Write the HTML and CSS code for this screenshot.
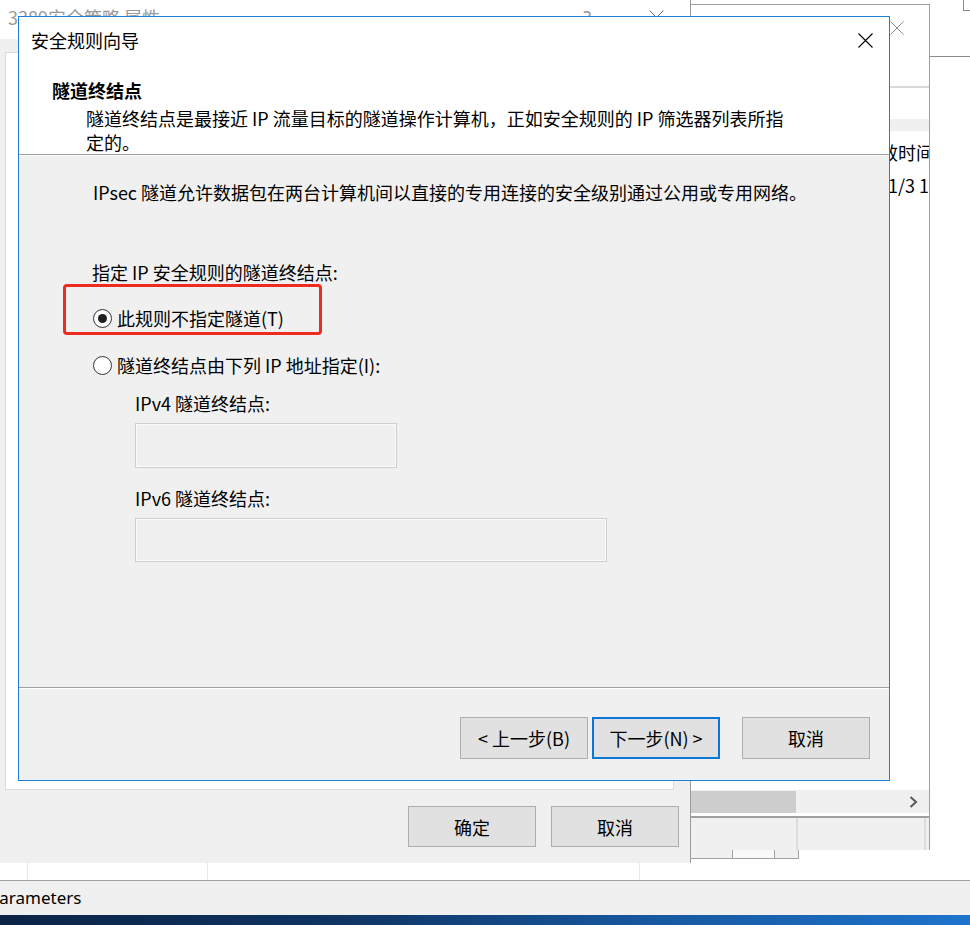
FILE: index.html
```html
<!DOCTYPE html>
<html lang="zh-CN">
<head>
<meta charset="utf-8">
<title>安全规则向导</title>
<link rel="stylesheet" href="styles.css">
</head>
<body>
<div class="desk">
  <div class="farwin"></div>
  <div class="farwin2"></div>
  <div class="listwin"><span class="lcol lc1"></span><span class="lcol lc2"></span><span class="lcol lc3"></span></div>
  <div class="minitabs"><span class="mt mt1"></span><span class="mt mt2"></span><span class="mt mt3"></span></div>

  <div class="backwin">
    <div class="bw-title">
      <svg class="bw-close" width="14" height="14" viewBox="0 0 14 14"><path d="M0.5 0.5 L13.5 13.5 M13.5 0.5 L0.5 13.5" stroke="#8c8c8c" stroke-width="1" fill="none"/></svg>
    </div>
    <div class="bw-rule"></div>
    <div class="bw-gap"></div>
    <div class="bw-band"></div>
    <div class="bw-list">
      <div class="bw-head">生效时间</div>
      <div class="bw-row">2021/1/3 14:05</div>
    </div>
    <div class="bw-scroll">
      <div class="bw-thumb"></div>
      <svg class="bw-arrow" width="9" height="12" viewBox="0 0 9 12"><path d="M1.5 1 L7 6 L1.5 11" stroke="#606060" stroke-width="2.2" fill="none"/></svg>
    </div>
    <div class="bw-sp"></div>
    <div class="bw-line"></div>
    <div class="bw-foot"><span class="bw-cell bw-cell1"></span><span class="bw-cell bw-cell2"></span></div>
  </div>

  <div class="propdlg">
    <div class="pd-title">
      <span class="pd-title-text">3389安全策略 属性</span>
      <span class="pd-help">?</span>
      <svg class="pd-close" width="15" height="15" viewBox="0 0 15 15"><path d="M0.5 0.5 L14.5 14.5 M14.5 0.5 L0.5 14.5" stroke="#666" stroke-width="1" fill="none"/></svg>
    </div>
    <div class="pd-body">
      <div class="pd-panel"></div>
      <div class="pd-buttons">
        <button class="btn">确定</button>
        <button class="btn">取消</button>
      </div>
    </div>
  </div>

  <div class="wizard">
    <div class="wz-titlebar">
      <span class="wz-title">安全规则向导</span>
      <svg class="wz-close" width="15" height="15" viewBox="0 0 15 15"><path d="M0.5 0.5 L14.5 14.5 M14.5 0.5 L0.5 14.5" stroke="#000" stroke-width="1.1" fill="none"/></svg>
    </div>
    <div class="wz-header">
      <div class="wz-heading">隧道终结点</div>
      <div class="wz-desc">隧道终结点是最接近 IP 流量目标的隧道操作计算机，正如安全规则的 IP 筛选器列表所指<br>定的。</div>
    </div>
    <div class="wz-sep"></div>
    <div class="wz-body">
      <p class="wz-intro">IPsec 隧道允许数据包在两台计算机间以直接的专用连接的安全级别通过公用或专用网络。</p>
      <div class="wz-question">指定 IP 安全规则的隧道终结点:</div>
      <div class="radio-row row1"><span class="radio"><span class="radio-dot"></span></span><span>此规则不指定隧道(T)</span></div>
      <div class="radio-row row2"><span class="radio"></span><span>隧道终结点由下列 IP 地址指定(I):</span></div>
      <div class="ip-label ip4-label">IPv4 隧道终结点:</div>
      <div class="ip-input ip4"></div>
      <div class="ip-label ip6-label">IPv6 隧道终结点:</div>
      <div class="ip-input ip6"></div>
    </div>
    <div class="wz-sep"></div>
    <div class="wz-footer">
      <button class="btn wbtn btn-back">&lt; 上一步(B)</button>
      <button class="btn wbtn btn-next">下一步(N) &gt;</button>
      <button class="btn wbtn">取消</button>
    </div>
  </div>

  <div class="annot"></div>
</div>
<div class="statusbar"><span>Parameters</span></div>
<div class="taskbar"></div>
</body>
</html>
```
FILE: styles.css
```css
html, body {
  margin: 0;
  padding: 0;
}
body {
  width: 970px;
  height: 925px;
  overflow: hidden;
  display: flex;
  flex-direction: column;
  font-family: "Noto Sans CJK SC", "Noto Sans", sans-serif;
  font-size: 18px;
  color: #000;
  background: #fff;
}
.desk {
  position: relative;
  height: 880px;
  flex: none;
}
.statusbar {
  height: 35px;
  flex: none;
  box-sizing: border-box;
  border-top: 1px solid #a0a0a0;
  background: #f0f0f0;
  font-family: "Noto Sans", sans-serif;
  font-size: 17px;
  line-height: 34px;
  text-indent: -11px;
  white-space: nowrap;
}
.taskbar {
  height: 10px;
  flex: none;
  background: linear-gradient(90deg, #0b2446 0%, #0f3462 35%, #17569c 65%, #1e74cc 100%);
}

/* far background windows */
.farwin {
  position: absolute;
  left: 930px;
  top: 56px;
  width: 60px;
  height: 200px;
  border-top: 1px solid #8a8a8a;
}
.farwin2 {
  position: absolute;
  left: 963px;
  top: -11px;
  width: 20px;
  height: 20px;
  border: 1px solid #8a8a8a;
}
.listwin {
  position: absolute;
  left: 0;
  top: 855px;
  width: 690px;
  height: 25px;
  display: flex;
}
.lcol {
  border-right: 1px solid #e2eaf4;
}
.lc1 { width: 27px; }
.lc2 { width: 179px; }
.lc3 { width: 431px; }
.minitabs {
  position: absolute;
  left: 690px;
  top: 850px;
  width: 109px;
  height: 9px;
  box-sizing: border-box;
  border: 1px solid #a0a0a0;
  border-top: none;
  background: #f0f0f0;
  display: flex;
}
.mt1, .mt2 {
  width: 41px;
  border-right: 1px solid #a0a0a0;
}
.mt2 { background: #f8f8f8; }
.mt3 { flex: 1; }

/* window behind, on the right */
.backwin {
  position: absolute;
  left: 300px;
  top: 4px;
  width: 630px;
  height: 846px;
  box-sizing: border-box;
  border: 1px solid #a0a0a0;
  border-bottom: none;
  background: #fff;
  display: flex;
  flex-direction: column;
}
.bw-title {
  height: 81px;
  flex: none;
  box-sizing: border-box;
  display: flex;
  justify-content: flex-end;
  align-items: flex-start;
  padding: 16px 25px 0 0;
}
.bw-rule { height: 2px; flex: none; background: #d9d9d9; }
.bw-gap { height: 31px; flex: none; }
.bw-band { height: 12px; flex: none; background: #f0f0f0; }
.bw-list {
  height: 659px;
  flex: none;
  white-space: nowrap;
  overflow: hidden;
}
.bw-head {
  padding: 9px 0 0 561px;
  line-height: 24px;
}
.bw-row {
  margin-top: 9px;
  padding-left: 540px;
  line-height: 24px;
}
.bw-scroll {
  height: 23px;
  flex: none;
  background: #f0f0f0;
  display: flex;
  align-items: center;
}
.bw-thumb {
  width: 495px;
  height: 22px;
  background: #cdcdcd;
}
.bw-arrow {
  margin-left: auto;
  margin-right: 11px;
}
.bw-sp { height: 3px; flex: none; }
.bw-line { height: 2px; flex: none; background: #a0a0a0; }
.bw-foot {
  flex: 1;
  background: #f0f0f0;
  display: flex;
}
.bw-cell {
  border-right: 2px solid #dcdcdc;
}
.bw-cell1 { width: 495px; }
.bw-cell2 { width: 126px; }

/* properties dialog */
.propdlg {
  position: absolute;
  left: 0;
  top: 0;
  width: 691px;
  height: 863px;
  box-sizing: border-box;
  border-right: 1px solid #9a9a9a;
  background: #f0f0f0;
  display: flex;
  flex-direction: column;
}
.pd-title {
  height: 39px;
  flex: none;
  box-sizing: border-box;
  background: #fff;
  display: flex;
  align-items: flex-start;
  padding-left: 8px;
  color: #999;
}
.pd-title-text {
  flex: 1;
  line-height: 34px;
}
.pd-help {
  line-height: 34px;
  margin-right: 58px;
  font-family: "Noto Sans", sans-serif;
}
.pd-close {
  margin-top: 10px;
  margin-right: 26px;
}
.pd-body {
  flex: 1;
  display: flex;
  flex-direction: column;
  padding: 13px 11px 16px 5px;
}
.pd-panel {
  flex: 1;
  background: #fff;
  border: 1px solid #dadada;
  margin-right: 5px;
}
.pd-buttons {
  margin-top: 16px;
  display: flex;
  justify-content: flex-end;
  gap: 15px;
}
.btn {
  font-family: inherit;
  font-size: 18px;
  color: #000;
  background: #e1e1e1;
  border: 1px solid #adadad;
  margin: 0;
  padding: 0;
  width: 128px;
  height: 41px;
}

/* wizard */
.wizard {
  position: absolute;
  left: 18px;
  top: 16px;
  width: 872px;
  height: 765px;
  box-sizing: border-box;
  border: 1px solid #1c7ed6;
  background: #f0f0f0;
  display: flex;
  flex-direction: column;
}
.wz-titlebar {
  height: 46px;
  flex: none;
  box-sizing: border-box;
  background: #fff;
  display: flex;
  align-items: center;
  padding: 0 16px 0 12px;
}
.wz-title {
  flex: 1;
  line-height: 46px;
}
.wz-header {
  height: 91px;
  flex: none;
  box-sizing: border-box;
  background: #fff;
  padding: 15px 0 0 33px;
}
.wz-heading {
  font-weight: bold;
  line-height: 24px;
}
.wz-desc {
  margin-top: 4px;
  padding-left: 34px;
  line-height: 24px;
}
.wz-sep {
  height: 2px;
  flex: none;
  box-sizing: border-box;
  border-top: 1px solid #a0a0a0;
  background: #fff;
}
.wz-body {
  height: 531px;
  flex: none;
  box-sizing: border-box;
  padding: 24px 0 0 73px;
}
.wz-intro {
  margin: 0 0 0 1px;
  line-height: 24px;
}
.wz-question {
  margin-top: 56px;
  line-height: 24px;
}
.radio-row {
  display: flex;
  align-items: center;
  height: 24px;
}
.row1 { margin-top: 22px; }
.row2 { margin-top: 23px; }
.radio {
  width: 19px;
  height: 19px;
  box-sizing: border-box;
  border: 1.5px solid #333;
  border-radius: 50%;
  background: #fff;
  display: flex;
  align-items: center;
  justify-content: center;
  margin: 0 5px 0 1px;
}
.radio-dot {
  width: 9px;
  height: 9px;
  border-radius: 50%;
  background: #1f1f1f;
}
.ip-label {
  margin-left: 43px;
  line-height: 24px;
}
.ip4-label { margin-top: 14px; }
.ip6-label { margin-top: 18px; }
.ip-input {
  margin: 8px 0 0 43px;
  box-sizing: border-box;
  border: 1px solid #cfcfcf;
  box-shadow: inset 0 0 0 1px #fafafa;
  background: #f0f0f0;
}
.ip4 { width: 262px; height: 45px; }
.ip6 { width: 472px; height: 44px; }
.wz-footer {
  flex: 1;
  display: flex;
  justify-content: flex-end;
  align-items: flex-start;
  padding: 28px 19px 0 0;
}
.wbtn { height: 42px; }
.btn-back { margin-right: 4px; }
.btn-next {
  margin-right: 22px;
  border: 2px solid #0a78d7;
}

/* red annotation frame */
.annot {
  position: absolute;
  left: 63px;
  top: 284px;
  width: 259px;
  height: 51px;
  box-sizing: border-box;
  border: 3px solid #ee2a21;
  border-radius: 4px;
}
```
